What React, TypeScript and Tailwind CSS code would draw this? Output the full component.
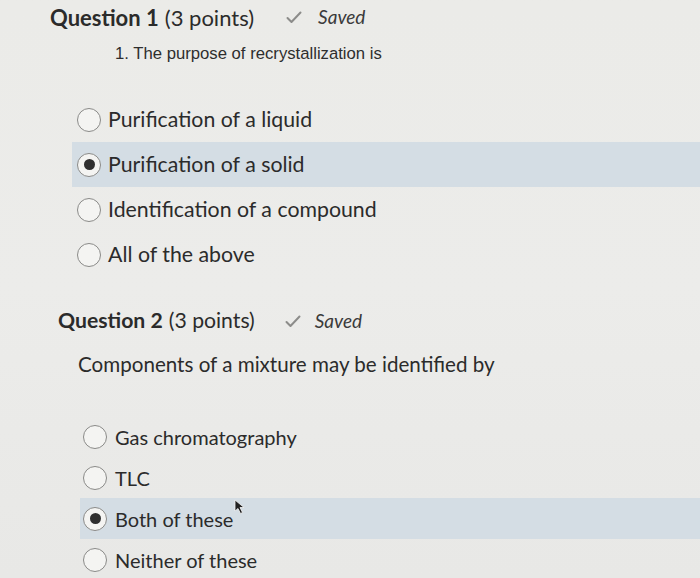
import React from 'react';

type Option = { label: string; selected?: boolean };

const Radio: React.FC<{ selected?: boolean }> = ({ selected }) => (
  <span className="flex h-[24px] w-[24px] shrink-0 items-center justify-center rounded-full border-[1.5px] border-[#8a8a88] bg-[#f4f4f2]">
    {selected && <span className="h-[11px] w-[11px] rounded-full bg-[#2f2f2f]" />}
  </span>
);

const CheckIcon: React.FC = () => (
  <svg width="16" height="13" viewBox="0 0 16 13" fill="none">
    <path d="M1.5 7 L5.5 11 L14.5 1.5" stroke="#8c8c8a" strokeWidth="2" strokeLinecap="round" strokeLinejoin="round" />
  </svg>
);

const Header: React.FC<{ num: number; size: string }> = ({ num, size }) => (
  <div className={`flex items-center ${size}`}>
    <span className="font-bold text-[#2b2b2b]">Question {num}</span>
    <span className="ml-[6px] text-[#2b2b2b]">(3 points)</span>
  </div>
);

const App: React.FC = () => {
  const q1: Option[] = [
    { label: 'Purification of a liquid' },
    { label: 'Purification of a solid', selected: true },
    { label: 'Identification of a compound' },
    { label: 'All of the above' },
  ];
  const q2: Option[] = [
    { label: 'Gas chromatography' },
    { label: 'TLC' },
    { label: 'Both of these', selected: true },
    { label: 'Neither of these' },
  ];

  return (
    <div
      className="relative h-[578px] w-[700px] overflow-hidden bg-gradient-to-b from-[#ebebe8] via-[#ececea] to-[#e8e8e6] text-[#2b2b2b]"
      style={{ fontFamily: 'Lato, "Open Sans", sans-serif' }}
    >
      {/* Question 1 */}
      <div className="flex h-[34px] items-center pl-[50px]">
        <Header num={1} size="text-[22px]" />
        <span className="ml-[32px]"><CheckIcon /></span>
        <span className="ml-[16px] text-[19px] italic text-[#3a3a3a]">Saved</span>
      </div>
      <div
        className="flex h-[40px] items-center pl-[115px] text-[16.7px] text-[#2e2e2e]"
        style={{ fontFamily: '"Liberation Sans", Arial, sans-serif' }}
      >
        1. The purpose of recrystallization is
      </div>
      <div className="mt-[23px] flex flex-col">
        {q1.map((o) => (
          <div
            key={o.label}
            className={`ml-[72px] flex h-[45px] items-center gap-[7px] pl-[5px] text-[21.3px] ${o.selected ? 'bg-[#d4dde4]' : ''}`}
          >
            <Radio selected={o.selected} />
            <span>{o.label}</span>
          </div>
        ))}
      </div>

      {/* Question 2 */}
      <div className="mt-[27px] flex h-[34px] items-center pl-[58px]">
        <Header num={2} size="text-[21.2px]" />
        <span className="ml-[30px]"><CheckIcon /></span>
        <span className="ml-[14px] text-[19px] italic text-[#3a3a3a]">Saved</span>
      </div>
      <div className="flex h-[52px] items-center pl-[78px] text-[20.6px]">
        Components of a mixture may be identified by
      </div>
      <div className="mt-[26px] flex flex-col">
        {q2.map((o) => (
          <div
            key={o.label}
            className={`ml-[80px] flex h-[41px] items-center gap-[8px] pl-[3px] text-[20px] ${o.selected ? 'bg-[#d4dde4]' : ''}`}
          >
            <Radio selected={o.selected} />
            <span>{o.label}</span>
          </div>
        ))}
      </div>

      {/* mouse pointer */}
      <svg className="absolute left-[234px] top-[499px]" width="12" height="16" viewBox="0 0 12 16">
        <path d="M1 1 L1 12 L4 9.5 L6.5 14.5 L8.5 13.5 L6 8.5 L10 8.5 Z" fill="#222" stroke="#f2f2f2" strokeWidth="0.8" />
      </svg>
    </div>
  );
};

export default App;
